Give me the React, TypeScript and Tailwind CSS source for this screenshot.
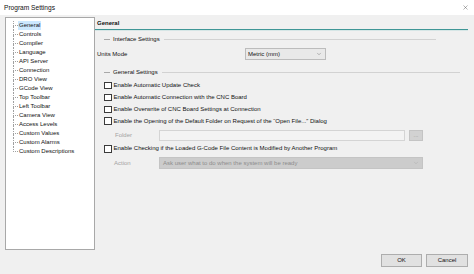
import { X, ChevronDown } from "lucide-react";

const treeItems = [
  "General",
  "Controls",
  "Compiler",
  "Language",
  "API Server",
  "Connection",
  "DRO View",
  "GCode View",
  "Top Toolbar",
  "Left Toolbar",
  "Camera View",
  "Access Levels",
  "Custom Values",
  "Custom Alarms",
  "Custom Descriptions",
];

function TreeRow({ label, selected, last }: { label: string; selected: boolean; last: boolean }) {
  return (
    <div className="flex h-[9.03px] items-stretch">
      <div className="w-[7px] shrink-0" />
      <div className="flex w-[5px] shrink-0 flex-col">
        <div className="flex-1 border-b border-l border-dotted border-[#a0a0a0]" />
        <div className={"flex-1 border-l border-dotted " + (last ? "border-transparent" : "border-[#a0a0a0]")} />
      </div>
      <div className="flex items-center">
        <span className={"px-[1px] leading-[9px] " + (selected ? "bg-[#cce8ff]" : "")}>{label}</span>
      </div>
    </div>
  );
}

function GroupHeader({ title, lineWidth }: { title: string; lineWidth: string }) {
  return (
    <div className="flex h-[11px] items-center pl-[9px]">
      <div className="h-px w-[6px] bg-[#a8a8a8]" />
      <span className="ml-[3px] mr-[4px]">{title}</span>
      <div className={"h-px bg-[#d2d2d2] " + lineWidth} />
    </div>
  );
}

function Check({ label }: { label: string }) {
  return (
    <div className="flex h-[11.8px] items-center pl-[9px]">
      <div className="h-[7.5px] w-[7.5px] shrink-0 border border-[#3a3a3a] bg-white" />
      <span className="ml-[2px] whitespace-nowrap">{label}</span>
    </div>
  );
}

export default function App() {
  return (
    <div className="flex h-[274px] w-[474px] flex-col overflow-hidden bg-[#f0f0f0] font-['Liberation_Sans',Arial,sans-serif] text-[6px] text-[#111]">
      <div className="flex h-[15px] items-center justify-between bg-white pl-[4px] pr-[5px]">
        <span className="text-[6.6px]">Program Settings</span>
        <X size={7} strokeWidth={1.4} className="text-[#444]" />
      </div>

      <div className="flex flex-col px-[5px] pt-[2px]">
        <div className="flex h-[233px]">
          <div className="w-[90px] shrink-0 border border-[#a8a8a8] bg-white pt-[2.8px]">
            {treeItems.map((t, i) => (
              <TreeRow key={t} label={t} selected={i === 0} last={i === treeItems.length - 1} />
            ))}
          </div>

          <div className="flex flex-1 flex-col pr-[1px]">
            <div className="flex h-[13px] items-center border-b border-[#3f9696] pl-[2px] font-bold">General</div>
            <div className="h-px bg-[#d6e6e6]" />

            <div className="mt-[3px]">
              <GroupHeader title="Interface Settings" lineWidth="w-[272px]" />
            </div>

            <div className="mt-[3px] flex h-[12px] items-center pl-[2px]">
              <span className="w-[148px]">Units Mode</span>
              <div className="flex h-[12px] w-[81px] items-center justify-between border border-[#bcbcbc] bg-[#e9e9e9] pl-[2px] pr-[3px]">
                <span>Metric (mm)</span>
                <ChevronDown size={6} strokeWidth={1.5} className="text-[#555]" />
              </div>
            </div>

            <div className="mt-[7px]">
              <GroupHeader title="General Settings" lineWidth="w-[298px]" />
            </div>

            <div className="mt-[1.8px] flex flex-col">
              <Check label="Enable Automatic Update Check" />
              <Check label="Enable Automatic Connection with the CNC Board" />
              <Check label="Enable Overwrite of CNC Board Settings at Connection" />
              <Check label={"Enable the Opening of the Default Folder on Request of the \u201cOpen File...\u201d Dialog"} />
            </div>

            <div className="mt-[2.7px] flex h-[11.6px] items-center pl-[20px]">
              <span className="w-[44px] text-[#a3a3a3]">Folder</span>
              <div className="h-[11.6px] w-[246px] border border-[#d4d4d4] bg-[#f3f3f3]" />
              <div className="ml-[4px] flex h-[11.6px] w-[14px] items-center justify-center border border-[#c4c4c4] bg-[#d2d2d2] text-[#9a9a9a]">
                ...
              </div>
            </div>

            <div className="mt-[1.8px]">
              <Check label="Enable Checking if the Loaded G-Code File Content is Modified by Another Program" />
            </div>

            <div className="mt-[2.4px] flex h-[11.7px] items-center pl-[19px]">
              <span className="w-[45px] text-[#a3a3a3]">Action</span>
              <div className="flex h-[11.7px] w-[264px] items-center justify-between border border-[#c4c4c4] bg-[#cccccc] pl-[3px] pr-[3px] text-[#8c8c8c]">
                <span>Ask user what to do when the system will be ready</span>
                <ChevronDown size={6} strokeWidth={1.5} className="text-[#a0a0a0]" />
              </div>
            </div>
          </div>
        </div>

        <div className="mt-[4px] flex justify-end gap-[4px] pr-[1px]">
          <button className="h-[13px] w-[41px] border border-[#adadad] bg-[#e1e1e1] text-[6px]">OK</button>
          <button className="h-[13px] w-[42px] border border-[#adadad] bg-[#e1e1e1] text-[6px]">Cancel</button>
        </div>
      </div>
    </div>
  );
}
